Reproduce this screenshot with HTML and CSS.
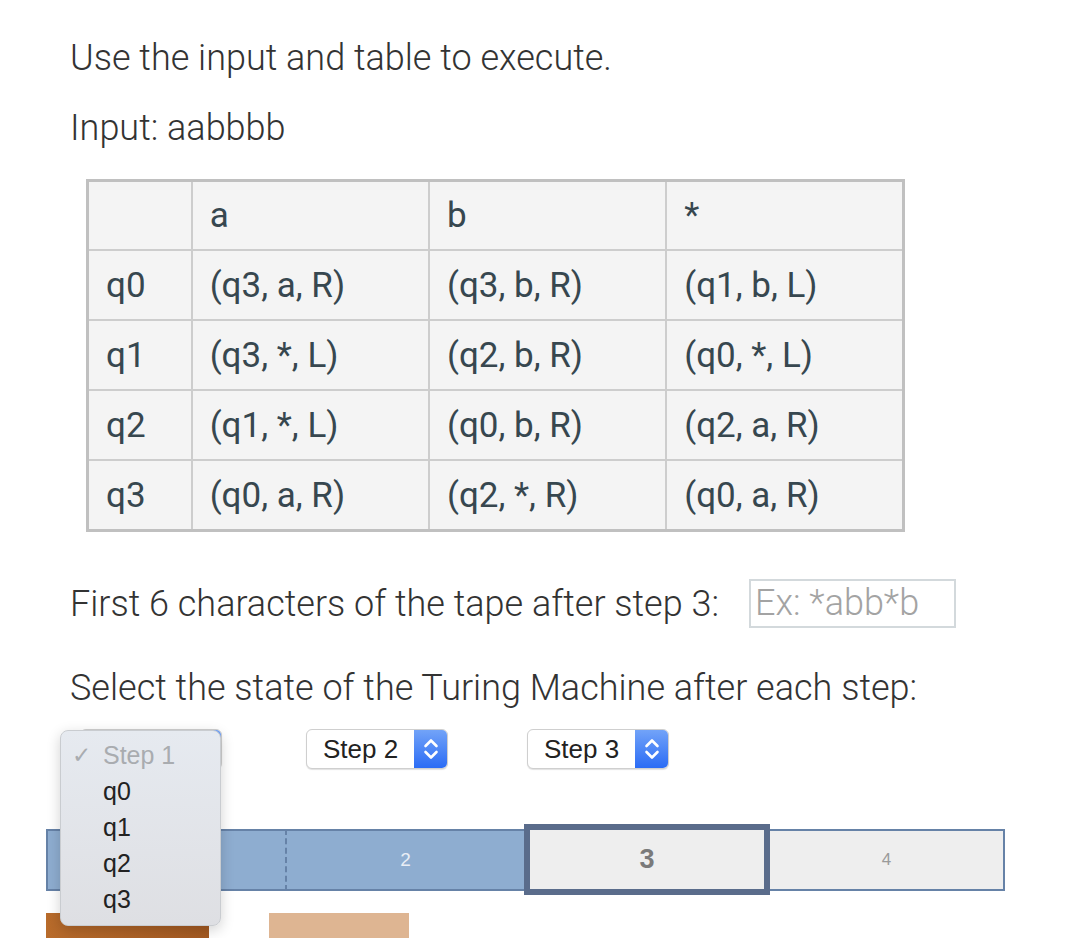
FILE: index.html
```html
<!DOCTYPE html>
<html>
<head>
<meta charset="utf-8">
<link rel="stylesheet" href="styles.css">
</head>
<body>
<div class="page">
  <p class="line first">Use the input and table to execute.</p>
  <p class="line second">Input: aabbbb</p>
  <table class="tm">
    <colgroup><col class="col-st"><col class="col-sym"><col class="col-sym"><col class="col-sym"></colgroup>
    <tr class="head"><td></td><td>a</td><td>b</td><td>*</td></tr>
    <tr><td>q0</td><td>(q3, a, R)</td><td>(q3, b, R)</td><td>(q1, b, L)</td></tr>
    <tr><td>q1</td><td>(q3, *, L)</td><td>(q2, b, R)</td><td>(q0, *, L)</td></tr>
    <tr><td>q2</td><td>(q1, *, L)</td><td>(q0, b, R)</td><td>(q2, a, R)</td></tr>
    <tr><td>q3</td><td>(q0, a, R)</td><td>(q2, *, R)</td><td>(q0, a, R)</td></tr>
  </table>
  <div class="question">
    <span class="qtext">First 6 characters of the tape after step 3:</span>
    <span class="answer">Ex: *abb*b</span>
  </div>
  <p class="line select-line">Select the state of the Turing Machine after each step:</p>
  <div class="selects">
    <div class="sel sel1"><span class="sel-label"></span><span class="stepper"><svg width="18" height="28" viewBox="0 0 18 28"><path d="M3.5 11 L9 5.5 L14.5 11 M3.5 17 L9 22.5 L14.5 17" fill="none" stroke="#fff" stroke-width="2.6" stroke-linecap="round" stroke-linejoin="round"/></svg></span></div>
    <div class="sel sel2"><span class="sel-label">Step 2</span><span class="stepper"><svg width="18" height="28" viewBox="0 0 18 28"><path d="M3.5 11 L9 5.5 L14.5 11 M3.5 17 L9 22.5 L14.5 17" fill="none" stroke="#fff" stroke-width="2.6" stroke-linecap="round" stroke-linejoin="round"/></svg></span></div>
    <div class="sel sel3"><span class="sel-label">Step 3</span><span class="stepper"><svg width="18" height="28" viewBox="0 0 18 28"><path d="M3.5 11 L9 5.5 L14.5 11 M3.5 17 L9 22.5 L14.5 17" fill="none" stroke="#fff" stroke-width="2.6" stroke-linecap="round" stroke-linejoin="round"/></svg></span></div>
  </div>
  <div class="tape">
    <div class="cell done c1"></div>
    <div class="cell done c2">2</div>
    <div class="cell current">3</div>
    <div class="cell todo">4</div>
  </div>
  <div class="bars">
    <div class="bar bar1"></div>
    <div class="bar bar2"></div>
  </div>
  <div class="popup">
    <div class="opt checked"><span class="check">✓</span>Step 1</div>
    <div class="opt">q0</div>
    <div class="opt">q1</div>
    <div class="opt">q2</div>
    <div class="opt">q3</div>
  </div>
</div>
</body>
</html>
```
FILE: styles.css
```css
html, body {
  margin: 0;
  padding: 0;
  background: #fff;
}
.page {
  position: relative;
  width: 1070px;
  height: 938px;
  overflow: hidden;
  font-family: Roboto, "Liberation Sans", sans-serif;
  font-weight: 300;
  color: #333;
}
.line {
  margin: 0;
  font-size: 36px;
  line-height: 40px;
  padding-left: 70px;
}
.first { padding-top: 38px; }
.second { margin-top: 30px; }
.tm {
  margin: 31px 0 0 86px;
  width: 819px;
  table-layout: fixed;
  border-collapse: collapse;
  border: 3px solid #c0c0c0;
  background: #f4f4f4;
  color: #37474f;
  font-size: 35px;
  font-weight: 400;
}
.col-st { width: 104px; }
.col-sym { width: 237px; }
.tm td {
  border: 2px solid #cdcdcd;
  height: 68px;
  padding: 0 0 0 17px;
  text-align: left;
  vertical-align: middle;
  white-space: nowrap;
}
.tm .head td { height: 67px; }
.question {
  display: flex;
  align-items: center;
  margin-top: 47px;
  padding-left: 70px;
  font-size: 36px;
}
.answer {
  margin-left: 30px;
  width: 207px;
  height: 49px;
  box-sizing: border-box;
  border: 2px solid #d3d9dc;
  color: #a3a3a3;
  padding-left: 4px;
  line-height: 44px;
}
.select-line { margin-top: 40px; }
.selects {
  display: flex;
  margin-top: 21px;
  padding-left: 80px;
  gap: 84px;
}
.sel {
  position: relative;
  display: flex;
  align-items: center;
  width: 142px;
  height: 40px;
  box-sizing: border-box;
  border: 1px solid #cfcfcf;
  border-radius: 6px;
  background: #fff;
  box-shadow: 0 1px 1px rgba(0,0,0,0.12);
  font-family: "Liberation Sans", Arial, sans-serif;
  font-weight: 400;
  font-size: 26px;
  color: #222;
  overflow: hidden;
}
.sel3 { margin-left: -5px; }
.sel-label {
  flex: 1;
  padding-left: 16px;
}
.stepper {
  width: 33px;
  align-self: stretch;
  display: flex;
  align-items: center;
  justify-content: center;
  background: linear-gradient(#72a3f8, #2b6cf5);
}
.tape {
  display: flex;
  align-items: center;
  margin-top: 55px;
  margin-left: 46px;
  height: 71px;
}
.cell {
  height: 62px;
  box-sizing: border-box;
  display: flex;
  align-items: center;
  justify-content: center;
  font-family: "Liberation Sans", Arial, sans-serif;
  font-size: 19px;
}
.done {
  background: #8eadd0;
  border-top: 2px solid #6682a7;
  border-bottom: 2px solid #6682a7;
  color: #e9eef5;
}
.c1 {
  width: 241px;
  border-left: 2px solid #6682a7;
  border-right: 2px dashed #6682a7;
}
.c2 { width: 237px; }
.current {
  width: 246px;
  height: 71px;
  border: 6px solid #5a6c8b;
  background: #eeeeee;
  color: #7a7a7a;
  font-weight: 700;
  font-size: 27px;
}
.todo {
  width: 235px;
  border: 2px solid #6682a7;
  border-left: none;
  background: #eeeeee;
  color: #9a9a9a;
  font-size: 17px;
}
.bars {
  display: flex;
  margin-top: 18px;
  margin-left: 46px;
  gap: 60px;
}
.bar { height: 30px; }
.bar1 { width: 163px; background: linear-gradient(90deg, #b86b2b, #a45a22); }
.bar2 { width: 140px; background: #deb592; }
.popup {
  position: absolute;
  left: 60px;
  top: 730px;
  width: 161px;
  height: 196px;
  box-sizing: border-box;
  padding: 6px 0 0 0;
  border-radius: 8px;
  background: linear-gradient(#e6eaf0, #dedfe3);
  border: 1px solid #c9ccd0;
  box-shadow: 0 4px 14px rgba(0,0,0,0.18);
  font-family: "Liberation Sans", Arial, sans-serif;
  font-weight: 400;
  font-size: 25px;
  color: #222;
}
.opt {
  height: 36px;
  line-height: 36px;
  padding-left: 42px;
  position: relative;
}
.checked { color: #a9acb0; }
.check {
  position: absolute;
  left: 11px;
  top: 0;
  font-family: "DejaVu Sans", sans-serif;
  font-size: 23px;
}
```
